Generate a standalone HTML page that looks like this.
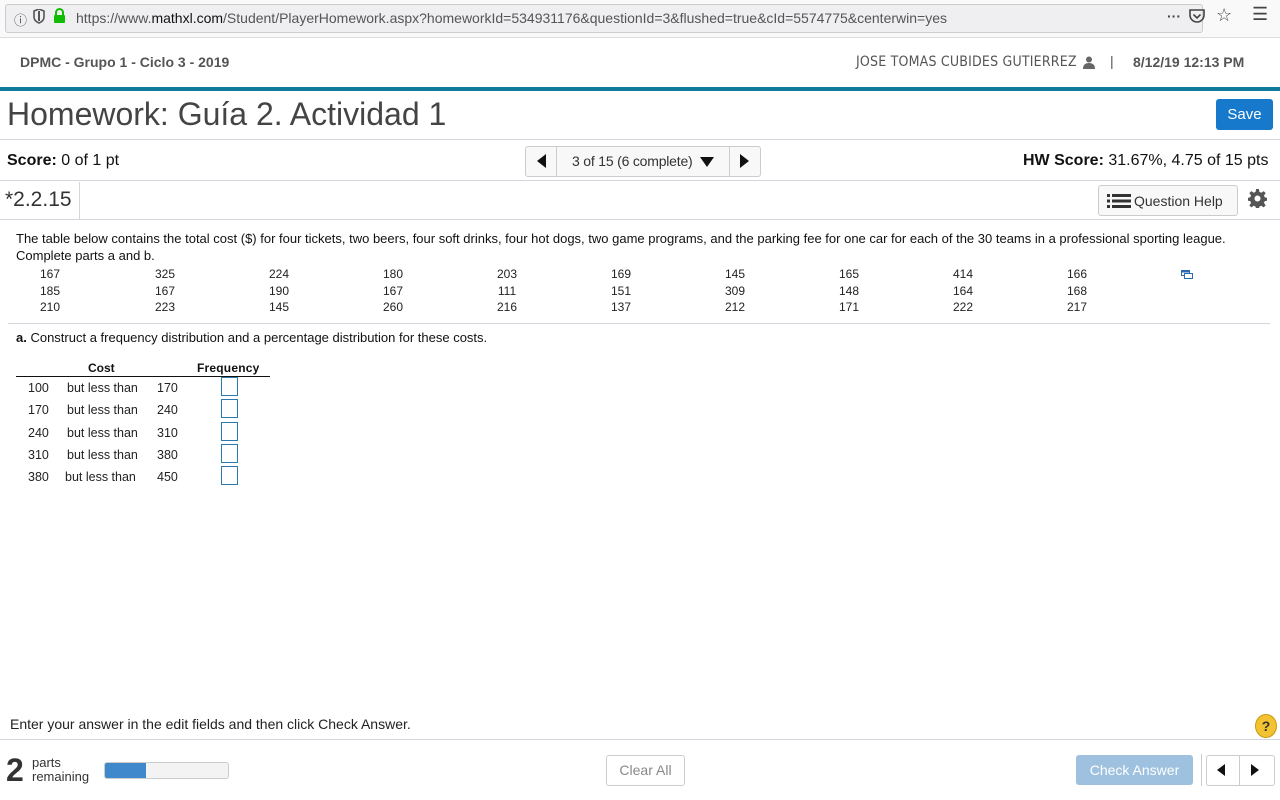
<!DOCTYPE html>
<html><head><meta charset="utf-8"><style>
body{margin:0;width:1280px;height:800px;position:relative;font-family:"Liberation Sans",Arial,sans-serif;color:#222;background:#fff;overflow:hidden}
.a{position:absolute;white-space:nowrap}
.hl{position:absolute;left:0;width:1280px;height:1px;background:#d3d6dc}
.n{position:absolute;font-size:12px;width:40px;text-align:center}
.box{position:absolute;left:221px;width:15px;height:17px;border:1px solid #2a7ab0}
</style></head><body>
<div class="a" style="left:0;top:0;width:1280px;height:37px;background:#f9f9fa;border-bottom:1px solid #ddd"></div>
<div class="a" style="left:5px;top:4px;width:1196px;height:27px;background:#efeff1;border:1px solid #ccc;border-radius:3px"></div>
<div class="a" style="left:14px;top:10px;font-size:13px;color:#555">ⓘ</div>
<svg class="a" style="left:33px;top:9px" width="12" height="15"><path d="M1 2 L6 0 L11 2 L11 8 Q11 12 6 14 Q1 12 1 8Z" fill="none" stroke="#555" stroke-width="1.6"/><path d="M6 2 L6 12" stroke="#555" stroke-width="2"/></svg>
<svg class="a" style="left:53px;top:8px" width="13" height="16"><path d="M3 7 V4.5 A3.5 3.5 0 0 1 10 4.5 V7" fill="none" stroke="#12bc00" stroke-width="2"/><rect x="1" y="7" width="11" height="8" rx="1" fill="#12bc00"/></svg>
<div class="a" style="left:76px;top:10px;font-size:14px;color:#555">https://www.<span style="color:#111">mathxl.com</span>/Student/PlayerHomework.aspx?homeworkId=534931176&amp;questionId=3&amp;flushed=true&amp;cId=5574775&amp;centerwin=yes</div>
<div class="a" style="left:1167px;top:8px;font-size:14px;color:#444;font-weight:bold">···</div>
<svg class="a" style="left:1189px;top:9px" width="16" height="15"><path d="M1 1 H15 V6 A7 7 0 0 1 1 6Z" fill="none" stroke="#444" stroke-width="1.6"/><path d="M4.5 5.5 L8 9 L11.5 5.5" fill="none" stroke="#444" stroke-width="1.6"/></svg>
<div class="a" style="left:1216px;top:5px;font-size:18px;color:#444">☆</div>
<div class="a" style="left:1252px;top:4px;font-size:18px;color:#444">☰</div>
<div class="a" style="left:20px;top:54px;font-size:14px;font-weight:bold;color:#555">DPMC - Grupo 1 - Ciclo 3 - 2019</div>
<div class="a" style="left:856px;top:54px;font-size:14px;color:#555;font-family:'DejaVu Sans Condensed','Liberation Sans',sans-serif;letter-spacing:0.2px">JOSE TOMAS CUBIDES GUTIERREZ</div>
<svg class="a" style="left:1083px;top:56px" width="12" height="13"><circle cx="6" cy="3.5" r="3" fill="#666"/><path d="M0 13 Q0 7 6 7 Q12 7 12 13Z" fill="#666"/></svg>
<div class="a" style="left:1110px;top:53px;font-size:14px;color:#555">|</div>
<div class="a" style="left:1133px;top:54px;font-size:14px;font-weight:bold;color:#555">8/12/19 12:13 PM</div>
<div class="a" style="left:0;top:87px;width:1280px;height:4px;background:#0f7b9b"></div>
<div class="a" style="left:7px;top:96px;font-size:32px;color:#444">Homework: Guía 2. Actividad 1</div>
<div class="a" style="left:1216px;top:99px;width:57px;height:31px;background:#1779cc;border-radius:3px;color:#fff;font-size:15px;line-height:31px;text-align:center">Save</div>
<div class="hl" style="top:139px"></div>
<div class="a" style="left:7px;top:152px;font-size:16px;color:#111"><b>Score:</b> 0 of 1 pt</div>
<div class="a" style="left:525px;top:146px;width:234px;height:29px;border:1px solid #ccc;border-radius:3px;background:#f8f8f8"></div>
<div class="a" style="left:556px;top:146px;width:1px;height:30px;background:#ccc"></div>
<div class="a" style="left:729px;top:146px;width:1px;height:30px;background:#ccc"></div>
<svg class="a" style="left:537px;top:154px" width="10" height="14"><path d="M9 0 L0 7 L9 14Z" fill="#111"/></svg>
<div class="a" style="left:572px;top:153px;font-size:14px;color:#333;letter-spacing:-0.2px">3 of 15 (6 complete)</div>
<svg class="a" style="left:700px;top:157px" width="14" height="10"><path d="M0 0 H14 L7 10Z" fill="#111"/></svg>
<svg class="a" style="left:740px;top:154px" width="10" height="14"><path d="M0 0 L9 7 L0 14Z" fill="#111"/></svg>
<div class="a" style="left:1023px;top:152px;font-size:16px;color:#111"><b>HW Score:</b> 31.67%, 4.75 of 15 pts</div>
<div class="hl" style="top:180px"></div>
<div class="a" style="left:5px;top:188px;font-size:21px;color:#333">*2.2.15</div>
<div class="a" style="left:79px;top:182px;width:1px;height:37px;background:#d3d6dc"></div>
<div class="a" style="left:1098px;top:185px;width:138px;height:29px;border:1px solid #ccc;border-radius:3px;background:#f8f8f8"></div>
<svg class="a" style="left:1107px;top:194px" width="24" height="14"><g fill="#333"><rect x="0" y="0" width="3" height="3"/><rect x="5" y="0" width="19" height="3"/><rect x="0" y="5.5" width="3" height="3"/><rect x="5" y="5.5" width="19" height="3"/><rect x="0" y="11" width="3" height="3"/><rect x="5" y="11" width="19" height="3"/></g></svg>
<div class="a" style="left:1134px;top:193px;font-size:14px;color:#333">Question Help</div>
<svg class="a" style="left:1248px;top:189px" width="19" height="19" viewBox="0 0 20 20"><path fill="#555" d="M8.5 0h3l.5 3 2 1 2.5-1.8 2.1 2.1L16.8 6.8l.9 2 3 .5v3l-3 .5-.9 2 1.8 2.5-2.1 2.1-2.5-1.8-2 .9-.5 3h-3l-.5-3-2-.9-2.5 1.8-2.1-2.1 1.8-2.5-.9-2-3-.5v-3l3-.5.9-2L1.4 4.3 3.5 2.2 6 4l2-1z"/><circle cx="10" cy="10" r="3.2" fill="#fff"/></svg>
<div class="hl" style="top:219px"></div>
<div class="a" style="left:16px;top:230px;font-size:13px;line-height:17px;color:#111">The table below contains the total cost ($) for four tickets, two beers, four soft drinks, four hot dogs, two game programs, and the parking fee for one car for each of the 30 teams in a professional sporting league.<br>Complete parts a and b.</div>
<div id="g"></div>
<svg class="a" style="left:1181px;top:270px" width="12" height="10"><rect x="0.5" y="0.5" width="8" height="5" fill="none" stroke="#2a6ab0"/><rect x="3.5" y="3.5" width="8" height="5" fill="#fff" stroke="#2a6ab0"/><rect x="0.5" y="0.5" width="8" height="2" fill="#2a6ab0"/></svg>
<div class="a" style="left:8px;top:323px;width:1262px;height:1px;background:#d3d6dc"></div>
<div class="a" style="left:16px;top:330px;font-size:13px;color:#111"><b>a.</b> Construct a frequency distribution and a percentage distribution for these costs.</div>
<div class="a" style="left:88px;top:361px;font-size:12px;font-weight:bold;color:#111">Cost</div>
<div class="a" style="left:197px;top:361px;font-size:12px;font-weight:bold;color:#111;letter-spacing:0.2px">Frequency</div>
<div class="a" style="left:16px;top:376px;width:254px;height:1px;background:#111"></div>
<div id="r"></div>
<div class="a" style="left:10px;top:716px;font-size:14px;color:#222">Enter your answer in the edit fields and then click Check Answer.</div>
<div class="a" style="left:1255px;top:714px;width:20px;height:22px;border-radius:50%;background:#f2c230;border:1px solid #c89a10;text-align:center;font-size:14px;font-weight:bold;line-height:22px;color:#333">?</div>
<div class="hl" style="top:739px"></div>
<div class="a" style="left:6px;top:752px;font-size:32px;font-weight:bold;color:#333;letter-spacing:-1px">2</div>
<div class="a" style="left:32px;top:756px;font-size:13px;line-height:14px;color:#333">parts<br>remaining</div>
<div class="a" style="left:104px;top:762px;width:123px;height:15px;border:1px solid #ccc;border-radius:3px;background:#f3f3f3;overflow:hidden"><div style="width:41px;height:15px;background:#3f88cc"></div></div>
<div class="a" style="left:606px;top:755px;width:77px;height:29px;border:1px solid #ccc;border-radius:3px;color:#888;font-size:14px;line-height:29px;text-align:center">Clear All</div>
<div class="a" style="left:1076px;top:755px;width:117px;height:30px;background:#9dc1de;border-radius:3px;color:#fff;font-size:14px;line-height:30px;text-align:center">Check Answer</div>
<div class="a" style="left:1201px;top:754px;width:1px;height:32px;background:#ccc"></div>
<div class="a" style="left:1206px;top:755px;width:67px;height:29px;border:1px solid #ccc;border-radius:3px"></div>
<div class="a" style="left:1239px;top:755px;width:1px;height:30px;background:#ccc"></div>
<svg class="a" style="left:1217px;top:764px" width="8" height="12"><path d="M8 0 L0 6 L8 12Z" fill="#111"/></svg>
<svg class="a" style="left:1251px;top:764px" width="8" height="12"><path d="M0 0 L8 6 L0 12Z" fill="#111"/></svg>
<script>
var d=[[167,325,224,180,203,169,145,165,414,166],[185,167,190,167,111,151,309,148,164,168],[210,223,145,260,216,137,212,171,222,217]];
var h='',xs=[50,165,279,393,507,621,735,849,963,1077],ys=[267,284,300];
for(var i=0;i<3;i++)for(var j=0;j<10;j++)h+='<div class="n" style="left:'+(xs[j]-20)+'px;top:'+ys[i]+'px">'+d[i][j]+'</div>';
document.getElementById('g').innerHTML=h;
var r=[[100,170],[170,240],[240,310],[310,380],[380,450]],s='';
for(var k=0;k<5;k++){var y=381+k*22.3;s+='<div class="a" style="left:28px;top:'+y+'px;font-size:12.5px">'+r[k][0]+'</div><div class="a" style="left:'+(k==4?65:67)+'px;top:'+y+'px;font-size:12.5px">but less than</div><div class="a" style="left:157px;top:'+y+'px;font-size:12.5px">'+r[k][1]+'</div><div class="box" style="top:'+(y-4)+'px"></div>';}
document.getElementById('r').innerHTML=s;
</script>
</body></html>
